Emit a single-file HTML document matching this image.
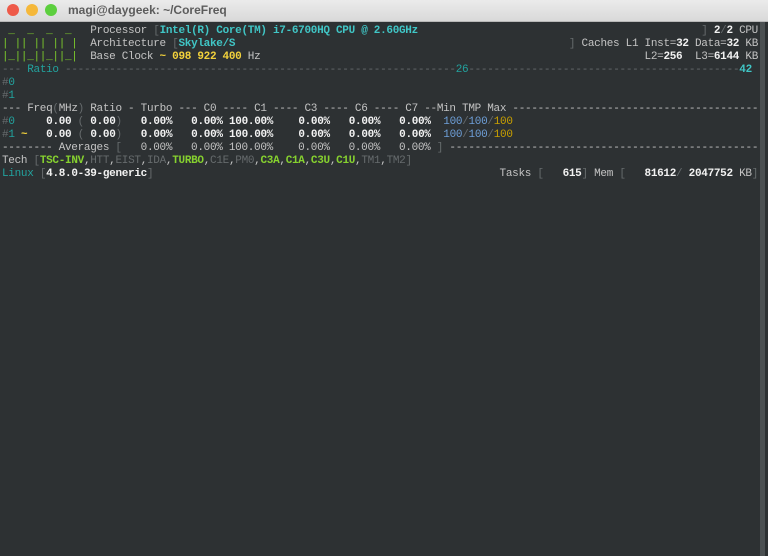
<!DOCTYPE html>
<html><head><meta charset="utf-8"><style>
html,body{margin:0;padding:0;background:#2d3133;width:768px;height:556px;overflow:hidden}
.tb{position:absolute;left:0;top:0;width:768px;height:21px;background:linear-gradient(#ebebeb,#d9d9d9);border-bottom:1px solid #b8b8b8}
.b{position:absolute;top:4px;width:12px;height:12px;border-radius:50%}
.tt{position:absolute;left:68px;top:3px;font:bold 12px "Liberation Sans",sans-serif;color:#5c5c5c}
.term{position:absolute;left:2px;top:25px;width:756px;font-family:"Liberation Mono",monospace;font-size:11px;letter-spacing:-0.3px;line-height:13px;color:#c4c4c4}
.l{position:relative;height:13px;white-space:pre;overflow:hidden}
.r{position:absolute;right:0;top:0}
.sb{position:absolute;left:760px;top:22px;width:5px;height:534px;background:#4b5052}
.c{color:#40c6c6;font-weight:bold}.y{color:#f2d23c;font-weight:bold}.g{color:#7ccb2c}.gb{color:#86d12f;font-weight:bold}
.d{color:#666b6d}.t{color:#22a39f}.w{color:#f2f2f2;font-weight:bold}.bl{color:#6e9fd8}.o{color:#c9a000}
</style></head><body>
<div class="tb"><div class="b" style="left:7px;background:#ee5a49"></div><div class="b" style="left:26px;background:#f5b83a"></div><div class="b" style="left:45px;background:#5ccf3e"></div><div class="tt">magi@daygeek: ~/CoreFreq</div></div>
<div class="sb"></div>
<div class="term"><div class="l"><span class="g"> _  _  _  _ </span>  Processor <span class="d">[</span><span class="c">Intel(R) Core(TM) i7-6700HQ CPU @ 2.60GHz</span><span class="r"><span class="d">]</span> <span class="w">2</span><span class="d">/</span><span class="w">2</span> CPU</span></div><div class="l"><span class="g">| || || || |</span>  Architecture <span class="d">[</span><span class="c">Skylake/S</span><span class="r"><span class="d">]</span> Caches L1 Inst=<span class="w">32</span> Data=<span class="w">32</span> KB</span></div><div class="l"><span class="g">|_||_||_||_|</span>  Base Clock <span class="y">~ 098 922 400</span> Hz<span class="r">L2=<span class="w">256</span>  L3=<span class="w">6144</span> KB</span></div><div class="l"><span class="d">--- </span><span class="t">Ratio</span><span class="d"> --------------------------------------------------------------</span><span class="t">26</span><span class="d">-------------------------------------------</span><span class="c">42</span></div><div class="l"><span class="d">#</span><span class="t">0</span></div><div class="l"><span class="d">#</span><span class="t">1</span></div><div class="l">--- Freq<span class="d">(</span>MHz<span class="d">)</span> Ratio - Turbo --- C0 ---- C1 ---- C3 ---- C6 ---- C7 --Min TMP Max -------------------------------------------</div><div class="l"><span class="d">#</span><span class="t">0</span>     <span class="w">0.00</span> <span class="d">(</span> <span class="w">0.00</span><span class="d">)</span>   <span class="w">0.00%</span>   <span class="w">0.00%</span> <span class="w">100.00%</span>    <span class="w">0.00%</span>   <span class="w">0.00%</span>   <span class="w">0.00%</span>  <span class="bl">100</span><span class="d">/</span><span class="bl">100</span><span class="d">/</span><span class="o">100</span></div><div class="l"><span class="d">#</span><span class="t">1</span> <span class="y">~</span>   <span class="w">0.00</span> <span class="d">(</span> <span class="w">0.00</span><span class="d">)</span>   <span class="w">0.00%</span>   <span class="w">0.00%</span> <span class="w">100.00%</span>    <span class="w">0.00%</span>   <span class="w">0.00%</span>   <span class="w">0.00%</span>  <span class="bl">100</span><span class="d">/</span><span class="bl">100</span><span class="d">/</span><span class="o">100</span></div><div class="l">-------- Averages <span class="d">[</span>   0.00%   0.00% 100.00%    0.00%   0.00%   0.00% <span class="d">]</span> ------------------------------------------------------</div><div class="l">Tech <span class="d">[</span><span class="gb">TSC-INV</span>,<span class="d">HTT</span>,<span class="d">EIST</span>,<span class="d">IDA</span>,<span class="gb">TURBO</span>,<span class="d">C1E</span>,<span class="d">PM0</span>,<span class="gb">C3A</span>,<span class="gb">C1A</span>,<span class="gb">C3U</span>,<span class="gb">C1U</span>,<span class="d">TM1</span>,<span class="d">TM2</span><span class="d">]</span></div><div class="l"><span class="t">Linux</span> <span class="d">[</span><span class="w">4.8.0-39-generic</span><span class="d">]</span><span class="r">Tasks <span class="d">[</span>   <span class="w">615</span><span class="d">]</span> Mem <span class="d">[</span>   <span class="w">81612</span><span class="d">/</span> <span class="w">2047752</span> KB<span class="d">]</span></span></div></div>
</body></html>
